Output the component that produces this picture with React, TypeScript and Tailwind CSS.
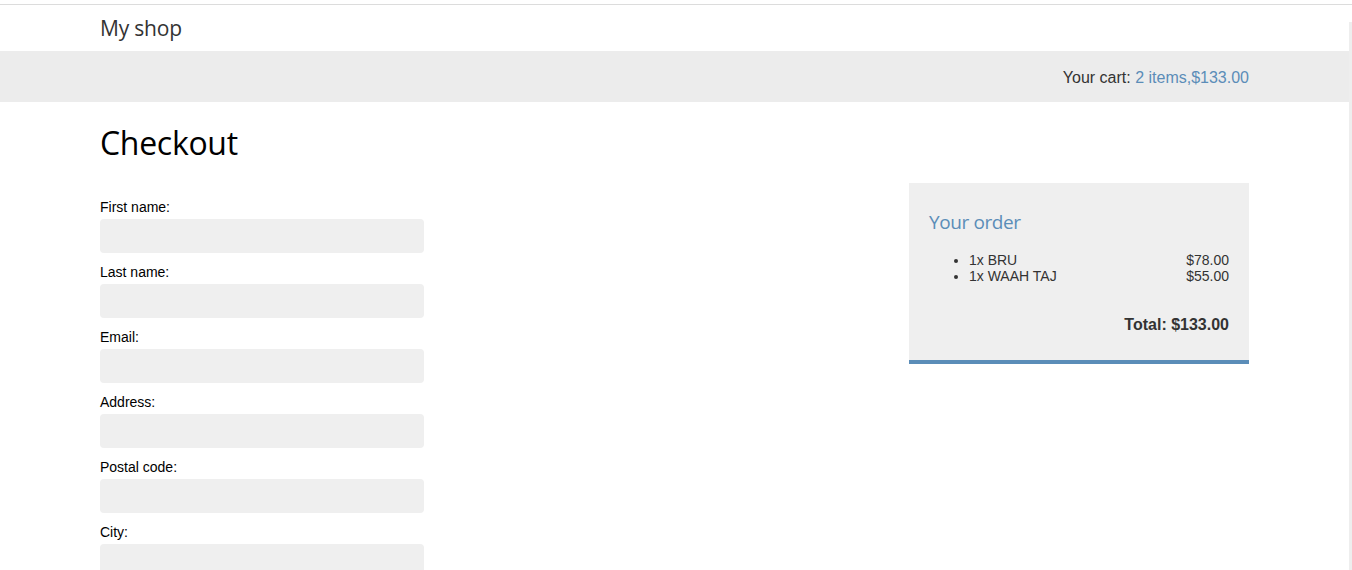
import React from "react";

const fields = ["First name:", "Last name:", "Email:", "Address:", "Postal code:", "City:"];

const items = [
  { name: "1x BRU", price: "$78.00" },
  { name: "1x WAAH TAJ", price: "$55.00" },
];

export default function App() {
  return (
    <div className="relative min-h-[570px] bg-white font-['Liberation_Sans',Arial,sans-serif] text-[#333]">
      <div className="mt-[4px] border-t border-[#dcdcdc]">
        <header className="h-[46px] pl-[100px] pt-[9px]">
          <span className="font-['Open_Sans',sans-serif] text-[21px] leading-[28px] tracking-[-0.2px] text-[#333]">
            My shop
          </span>
        </header>
        <div className="flex h-[51px] items-center justify-end bg-[#ececec] pr-[103px] pt-[3px] text-[16px]">
          <span className="text-[#333]">Your cart:&nbsp;</span>
          <a className="text-[#5b8db8]">2 items,$133.00</a>
        </div>

        <main className="ml-[100px] w-[1149px]">
          <h1 className="mt-[21px] font-['Open_Sans',sans-serif] text-[32px] leading-[40px] tracking-[-0.3px] text-black">
            Checkout
          </h1>
          <div className="mt-[20px] flex justify-between">
            <form className="w-[324px] pt-[16px]">
              {fields.map((f) => (
                <div key={f} className="mb-[11px]">
                  <label className="block text-[14px] leading-[16px] text-black">{f}</label>
                  <input className="mt-[4px] block h-[34px] w-[324px] rounded-[4px] bg-[#efefef] outline-none" />
                </div>
              ))}
            </form>

            <aside className="h-[181px] w-[340px] border-b-[4px] border-[#5b8db8] bg-[#efefef] px-[20px] pt-[27px]">
              <h3 className="font-['Open_Sans',sans-serif] text-[19px] leading-[24px] tracking-[-0.4px] text-[#5b8db8]">
                Your order
              </h3>
              <ul className="mt-[18px] list-disc pl-[40px] text-[14px] leading-[16px] text-[#333]">
                {items.map((it) => (
                  <li key={it.name}>
                    <div className="flex justify-between">
                      <span>{it.name}</span>
                      <span>{it.price}</span>
                    </div>
                  </li>
                ))}
              </ul>
              <p className="mt-[32px] text-right text-[16px] font-bold leading-[18px] text-[#333]">
                Total: $133.00
              </p>
            </aside>
          </div>
        </main>
      </div>
      <div className="absolute right-0 top-[18px] bottom-0 w-[3px] bg-[#eeeeee]" />
    </div>
  );
}
